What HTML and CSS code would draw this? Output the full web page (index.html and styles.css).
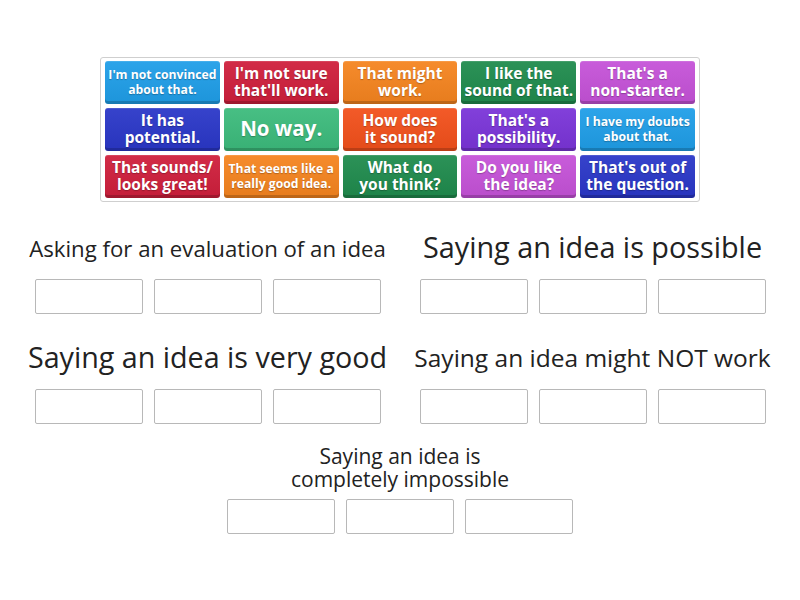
FILE: index.html
```html
<!DOCTYPE html>
<html>
<head>
<meta charset="utf-8">
<link rel="stylesheet" href="styles.css">
</head>
<body>
<div class="page">
  <div class="bank">
    <div class="tile lblue small">I'm not convinced about that.</div>
    <div class="tile red">I'm not sure that'll work.</div>
    <div class="tile orange">That might work.</div>
    <div class="tile dgreen">I like the sound of that.</div>
    <div class="tile pink">That's a non&#8209;starter.</div>

    <div class="tile dblue">It has potential.</div>
    <div class="tile teal big">No way.</div>
    <div class="tile ored">How does it sound?</div>
    <div class="tile purple">That's a possibility.</div>
    <div class="tile lblue small">I have my doubts about that.</div>

    <div class="tile red">That sounds/ looks great!</div>
    <div class="tile orange small">That seems like a really good idea.</div>
    <div class="tile dgreen">What do you think?</div>
    <div class="tile pink">Do you like the idea?</div>
    <div class="tile dblue">That's out of the question.</div>
  </div>

  <div class="groups">
    <div class="group">
      <div class="title ta">Asking for an evaluation of an idea</div>
      <div class="slots"><div class="slot"></div><div class="slot"></div><div class="slot"></div></div>
    </div>
    <div class="group">
      <div class="title tb">Saying an idea is possible</div>
      <div class="slots"><div class="slot"></div><div class="slot"></div><div class="slot"></div></div>
    </div>
    <div class="group">
      <div class="title tc">Saying an idea is very good</div>
      <div class="slots"><div class="slot"></div><div class="slot"></div><div class="slot"></div></div>
    </div>
    <div class="group">
      <div class="title td">Saying an idea might NOT work</div>
      <div class="slots"><div class="slot"></div><div class="slot"></div><div class="slot"></div></div>
    </div>
    <div class="group center">
      <div class="title te narrow">Saying an idea is completely impossible</div>
      <div class="slots"><div class="slot"></div><div class="slot"></div><div class="slot"></div></div>
    </div>
  </div>
</div>
</body>
</html>
```

FILE: styles.css
```css
html, body {
  margin: 0;
  padding: 0;
  background: #ffffff;
}
body {
  font-family: "Open Sans", "DejaVu Sans", sans-serif;
  color: #222222;
}
.page {
  width: 800px;
  height: 600px;
  padding-top: 57px;
  box-sizing: border-box;
}
.bank {
  width: 600px;
  margin: 0 auto;
  box-sizing: border-box;
  border: 1px solid #cfcfcf;
  border-radius: 3px;
  padding: 3px 4px;
  display: grid;
  grid-template-columns: repeat(5, 1fr);
  grid-auto-rows: 43px;
  gap: 4px 4px;
}
.tile {
  border-radius: 3px;
  color: #ffffff;
  font-weight: 700;
  font-size: 15.5px;
  line-height: 17px;
  text-align: center;
  text-wrap: balance;
  display: flex;
  align-items: center;
  justify-content: center;
  padding: 0 2px 2px;
  box-sizing: border-box;
  text-shadow: 0 1px 1px rgba(0,0,0,0.25);
  box-shadow: inset 0 -3px 0 rgba(0,0,0,0.18), inset 0 1px 0 rgba(255,255,255,0.12);
  background-image: linear-gradient(to bottom, rgba(255,255,255,0.06), rgba(0,0,0,0.06));
}
.tile.small { font-size: 12.2px; line-height: 15px; }
.tile.big { font-size: 20.5px; }
.lblue { background-color: #1f9ee8; }
.red { background-color: #cf1f3c; }
.orange { background-color: #f5841f; }
.dgreen { background-color: #1f8b4d; }
.pink { background-color: #c552d8; }
.dblue { background-color: #2a37c8; }
.teal { background-color: #3cbb7c; }
.ored { background-color: #f2501b; }
.purple { background-color: #7a34d8; }

.groups {
  margin-top: 20px;
  display: grid;
  grid-template-columns: 370px 370px;
  column-gap: 15px;
  justify-content: center;
}
.group {
  height: 110px;
  display: flex;
  flex-direction: column;
  align-items: center;
}
.group.center {
  grid-column: 1 / span 2;
  justify-self: center;
  width: 370px;
}
.title {
  height: 52px;
  box-sizing: border-box;
  display: flex;
  align-items: center;
  justify-content: center;
  text-align: center;
  white-space: nowrap;
  margin-bottom: 5px;
}
.ta { font-size: 22.2px; }
.tb { font-size: 28.8px; padding-bottom: 3px; }
.tc { font-size: 28.7px; padding-bottom: 3px; }
.td { font-size: 24.5px; padding-bottom: 2px; }
.te { font-size: 21px; line-height: 23px; }
.title.narrow { white-space: normal; width: 250px; }
.slots {
  display: flex;
  gap: 11px;
}
.slot {
  width: 108px;
  height: 35px;
  box-sizing: border-box;
  border: 1px solid #b8b8b8;
  border-radius: 2px;
  background: #ffffff;
}
```
